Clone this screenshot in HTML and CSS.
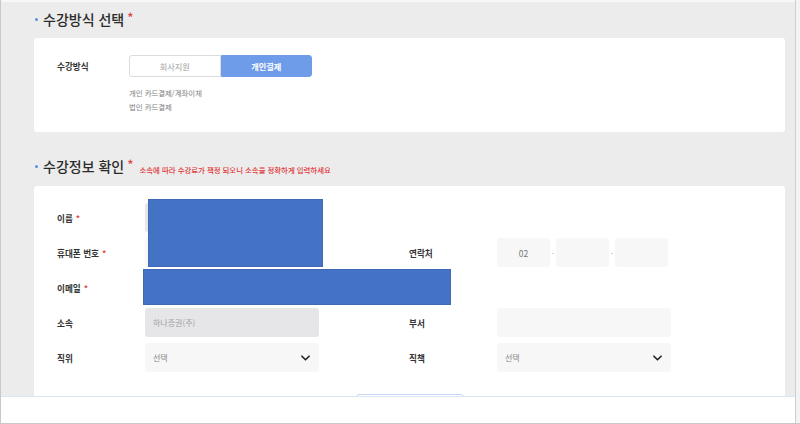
FILE: index.html
```html
<!DOCTYPE html>
<html lang="ko">
<head>
<meta charset="utf-8">
<title>수강신청</title>
<link rel="stylesheet" href="styles.css">
</head>
<body>
<div class="frame">
  <div class="main">
    <div class="topstrip"></div>

    <h2 class="sec-title"><span class="dot"></span>수강방식 선택<span class="req">*</span></h2>
    <section class="card card-method">
      <div class="method-row">
        <div class="label">수강방식</div>
        <div class="method-body">
          <div class="toggle">
            <button class="tg">회사지원</button>
            <button class="tg on">개인결제</button>
          </div>
          <p class="hint">개인 카드결제/계좌이체<br>법인 카드결제</p>
        </div>
      </div>
    </section>

    <h2 class="sec-title sec2"><span class="dot"></span>수강정보 확인<span class="req">*</span><span class="note">소속에 따라 수강료가 책정 되오니 소속을 정확하게 입력하세요</span></h2>
    <section class="card card-info">
      <div class="form-grid">
        <div class="label">이름 <span class="req-s">*</span></div>
        <div class="input disabled"></div>
        <div class="spacer"></div>
        <div class="spacer"></div>
        <div class="spacer"></div>

        <div class="label">휴대폰 번호 <span class="req-s">*</span></div>
        <div class="input"></div>
        <div class="spacer"></div>
        <div class="label">연락처</div>
        <div class="phone">
          <div class="input pbox">02</div><span class="dash">-</span>
          <div class="input pbox"></div><span class="dash">-</span>
          <div class="input pbox"></div>
        </div>

        <div class="label">이메일 <span class="req-s">*</span></div>
        <div class="input wide"></div>
        <div class="spacer"></div>
        <div class="spacer"></div>

        <div class="label">소속</div>
        <div class="input disabled">하나증권(주)</div>
        <div class="spacer"></div>
        <div class="label">부서</div>
        <div class="input"></div>

        <div class="label">직위</div>
        <div class="input select">선택<svg class="chev" viewBox="0 0 10 6" width="9" height="6"><path d="M1 1 L5 5 L9 1" fill="none" stroke="#222" stroke-width="1.8" stroke-linecap="round" stroke-linejoin="round"/></svg></div>
        <div class="spacer"></div>
        <div class="label">직책</div>
        <div class="input select">선택<svg class="chev" viewBox="0 0 10 6" width="9" height="6"><path d="M1 1 L5 5 L9 1" fill="none" stroke="#222" stroke-width="1.8" stroke-linecap="round" stroke-linejoin="round"/></svg></div>
      </div>
      <div class="btn-row"><button class="next-btn">다음</button></div>
    </section>

    <div class="bottombar"></div>
  </div>
  <div class="scroll"></div>

  <div class="redact r1"></div>
  <div class="redact r2"></div>
</div>
</body>
</html>
```
FILE: styles.css
```css
* { box-sizing: border-box; }
html, body { margin: 0; padding: 0; }
body {
  width: 800px;
  height: 424px;
  overflow: hidden;
  background: #ececec;
  font-family: "Noto Sans CJK KR", "Noto Sans", sans-serif;
  color: #333;
}
.frame {
  position: relative;
  width: 800px;
  height: 424px;
  display: flex;
  border-left: 1px solid #c9c9c9;
  border-bottom: 1px solid #c9c9c9;
  overflow: hidden;
}
.main {
  position: relative;
  flex: 1;
  padding: 0 10px 0 33px;
  overflow: hidden;
}
.scroll {
  width: 5px;
  border-left: 1px solid #cfcfcf;
  background: #f3f3f3;
}
.topstrip {
  height: 2px;
  margin: 0 -10px 0 -33px;
  background: #f7f7f7;
}
.sec-title {
  display: flex;
  align-items: baseline;
  margin: 7px 0 9px;
  height: 20px;
  line-height: 20px;
  font-size: 14px;
  font-weight: 500;
  color: #2b2b2b;
}
.sec2 { margin-top: 24px; margin-bottom: 10px; }
.dot {
  align-self: center;
  width: 3px;
  height: 3px;
  border-radius: 50%;
  background: #5b8fe0;
  margin: 0 5px 0 1px;
}
.req {
  color: #e04848;
  font-size: 13px;
  margin-left: 3px;
  position: relative;
  top: -2px;
}
.note {
  color: #e03535;
  font-size: 7.4px;
  font-weight: 500;
  margin-left: 6px;
  position: relative;
  top: 1px;
}
.card {
  background: #fff;
  border-radius: 3px;
}
.card-method {
  height: 94px;
  padding: 17px 0 0 23px;
}
.method-row {
  display: flex;
  align-items: flex-start;
}
.method-row .label {
  width: 72px;
  height: 22px;
  line-height: 22px;
}
.label {
  font-size: 8.6px;
  font-weight: 700;
  color: #333;
  display: flex;
  align-items: center;
}
.req-s { color: #e04848; margin-left: 3px; }
.toggle {
  display: flex;
  width: 183px;
  height: 22px;
}
.tg {
  flex: 1;
  border: 1px solid #dcdcdc;
  background: #fff;
  color: #a0a0a0;
  font-family: inherit;
  font-size: 8.2px;
  padding: 0;
  border-radius: 3px 0 0 3px;
}
.tg.on {
  background: #6f9ce8;
  border-color: #6f9ce8;
  color: #fff;
  font-weight: 700;
  border-radius: 0 3px 3px 0;
}
.hint {
  margin: 9px 0 0;
  font-size: 7.4px;
  line-height: 14px;
  color: #7d7d7d;
}
.card-info {
  height: 260px;
  padding: 17px 0 0 23px;
}
.form-grid {
  display: grid;
  grid-template-columns: 88px 174px 90px 88px 174px;
  grid-auto-rows: 29px;
  row-gap: 6px;
}
.input {
  background: #f7f7f7;
  border-radius: 3px;
  font-size: 8px;
  color: #a0a0a0;
  display: flex;
  align-items: center;
  padding-left: 8px;
}
.input.disabled { background: #e6e6e9; }
.input.wide { grid-column: 2 / 4; }
.select {
  justify-content: space-between;
  padding-right: 9px;
  color: #888;
}
.phone {
  display: flex;
  align-items: center;
}
.pbox {
  width: 53px;
  height: 29px;
  justify-content: center;
  padding: 0;
  color: #777;
  font-size: 8.5px;
}
.dash {
  width: 6px;
  text-align: center;
  font-size: 7px;
  color: #999;
}
.btn-row {
  display: flex;
  justify-content: center;
  margin-top: 22px;
  padding-right: 23px;
}
.next-btn {
  width: 108px;
  height: 30px;
  border: 1px solid #c6d9f3;
  border-radius: 3px;
  background: #fff;
  font-family: inherit;
}
.bottombar {
  position: absolute;
  left: 0;
  right: 0;
  top: 396px;
  bottom: 0;
  background: #fff;
  border-top: 1px solid #dbe7f4;
}
.redact {
  position: absolute;
  background: #4472c4;
  border: 1px solid #4069b4;
}
.r1 { left: 147px; top: 199px; width: 175px; height: 68px; }
.r2 { left: 142px; top: 269px; width: 308px; height: 36px; }
```
